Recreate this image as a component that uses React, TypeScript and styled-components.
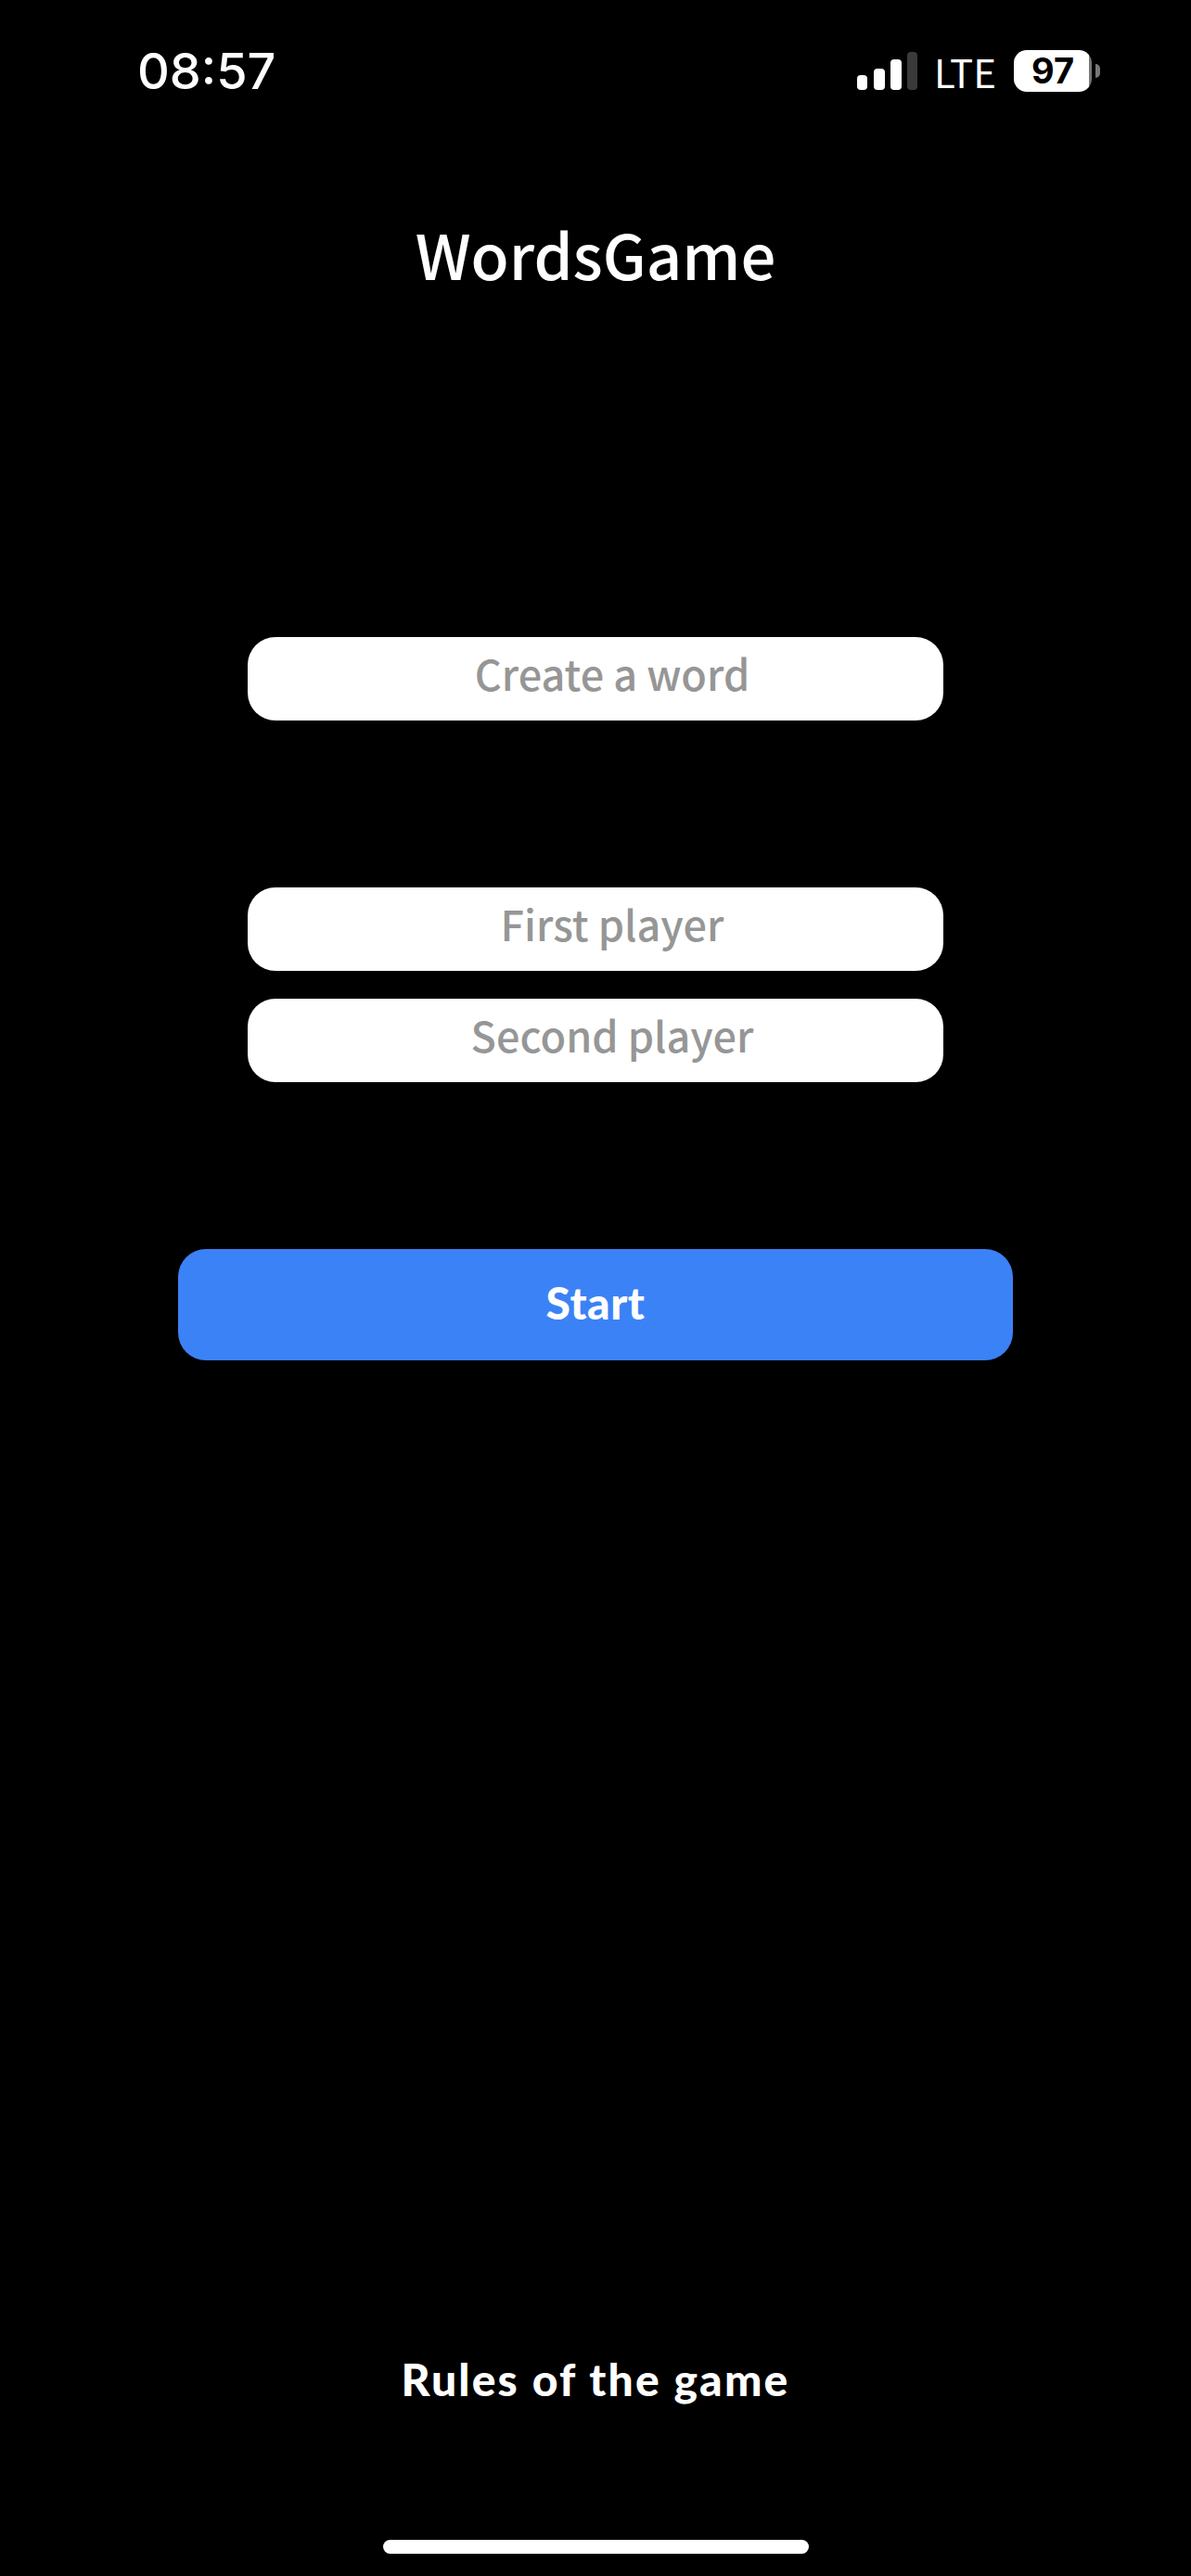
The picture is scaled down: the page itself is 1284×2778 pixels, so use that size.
import styled, { createGlobalStyle } from 'styled-components';

const GlobalStyles = createGlobalStyle`
  html, body {
    margin: 0;
    padding: 0;
    background: #000;
  }
  * {
    box-sizing: border-box;
  }
`;

const Screen = styled.div`
  width: 100%;
  height: 100vh;
  background: #000;
  color: #fff;
  display: flex;
  flex-direction: column;
  align-items: center;
  overflow: hidden;
`;

const StatusBar = styled.div`
  width: 100%;
  height: 152px;
  flex-shrink: 0;
  padding: 0 98px 0 148px;
  display: flex;
  align-items: center;
  justify-content: space-between;
`;

const Time = styled.span`
  font-family: Inter, sans-serif;
  font-size: 54px;
  font-weight: 500;
`;

const StatusIcons = styled.div`
  display: flex;
  align-items: center;
`;

const Carrier = styled.span`
  margin-left: 18px;
  padding-top: 2px;
  font-family: 'Noto Sans CJK KR', sans-serif;
  font-size: 42px;
  font-weight: 400;
  line-height: 46px;
`;

const Battery = styled.div`
  width: 84px;
  height: 45px;
  margin-left: 19px;
  border-radius: 14px;
  background: linear-gradient(90deg, #fff 97%, #777 97%);
  color: #000;
  font-family: Inter, sans-serif;
  font-size: 38px;
  font-weight: 700;
  display: flex;
  align-items: center;
  justify-content: center;
`;

const BatteryCap = styled.div`
  width: 5px;
  height: 15px;
  margin-left: 4px;
  border-radius: 0 8px 8px 0;
  background: #777;
`;

const Title = styled.h1`
  margin: 71px 0 0;
  font-family: 'Noto Sans CJK KR', sans-serif;
  font-size: 67px;
  font-weight: 500;
  line-height: 100px;
`;

const Form = styled.div`
  margin-top: 364px;
  display: flex;
  flex-direction: column;
  align-items: center;
`;

const Group = styled.div`
  display: flex;
  flex-direction: column;
  gap: 30px;
  margin-bottom: 180px;
`;

const TextField = styled.input`
  display: block;
  width: 750px;
  height: 90px;
  padding: 0 0 14px 36px;
  border: none;
  outline: none;
  border-radius: 30px;
  background: #fff;
  font-family: 'Noto Sans CJK KR', sans-serif;
  font-size: 45px;
  font-weight: 500;
  text-align: center;

  &::placeholder {
    color: #969696;
    opacity: 1;
  }
`;

const StartButton = styled.button`
  width: 900px;
  height: 120px;
  padding: 0 0 6px;
  border: none;
  border-radius: 30px;
  background: #3b82f6;
  color: #fff;
  font-family: Lato, sans-serif;
  font-size: 48px;
  font-weight: 900;
  letter-spacing: 0.5px;
`;

const RulesLink = styled.a`
  margin-top: auto;
  font-family: Lato, sans-serif;
  font-size: 48px;
  font-weight: 900;
  line-height: 60px;
  letter-spacing: 2.2px;
  color: #fff;
`;

const HomeBar = styled.div`
  width: 459px;
  height: 15px;
  flex-shrink: 0;
  margin: 143px 0 24px;
  border-radius: 8px;
  background: #fff;
`;

const SignalIcon = () => (
  <svg width="65" height="41" viewBox="0 0 65 41">
    <rect x="0" y="25" width="11" height="16" rx="4" fill="#fff" />
    <rect x="18" y="18" width="12" height="23" rx="4" fill="#fff" />
    <rect x="36" y="8" width="12" height="33" rx="4" fill="#fff" />
    <rect x="54" y="0" width="11" height="41" rx="4" fill="#3a3a3a" />
  </svg>
);

const App = () => {
  return (
    <>
      <GlobalStyles />
      <Screen>
        <StatusBar>
          <Time>08:57</Time>
          <StatusIcons>
            <SignalIcon />
            <Carrier>LTE</Carrier>
            <Battery>97</Battery>
            <BatteryCap />
          </StatusIcons>
        </StatusBar>
        <Title>WordsGame</Title>
        <Form>
          <Group>
            <TextField placeholder="Create a word" />
          </Group>
          <Group>
            <TextField placeholder="First player" />
            <TextField placeholder="Second player" />
          </Group>
          <StartButton>Start</StartButton>
        </Form>
        <RulesLink>Rules of the game</RulesLink>
        <HomeBar />
      </Screen>
    </>
  );
};

export default App;
